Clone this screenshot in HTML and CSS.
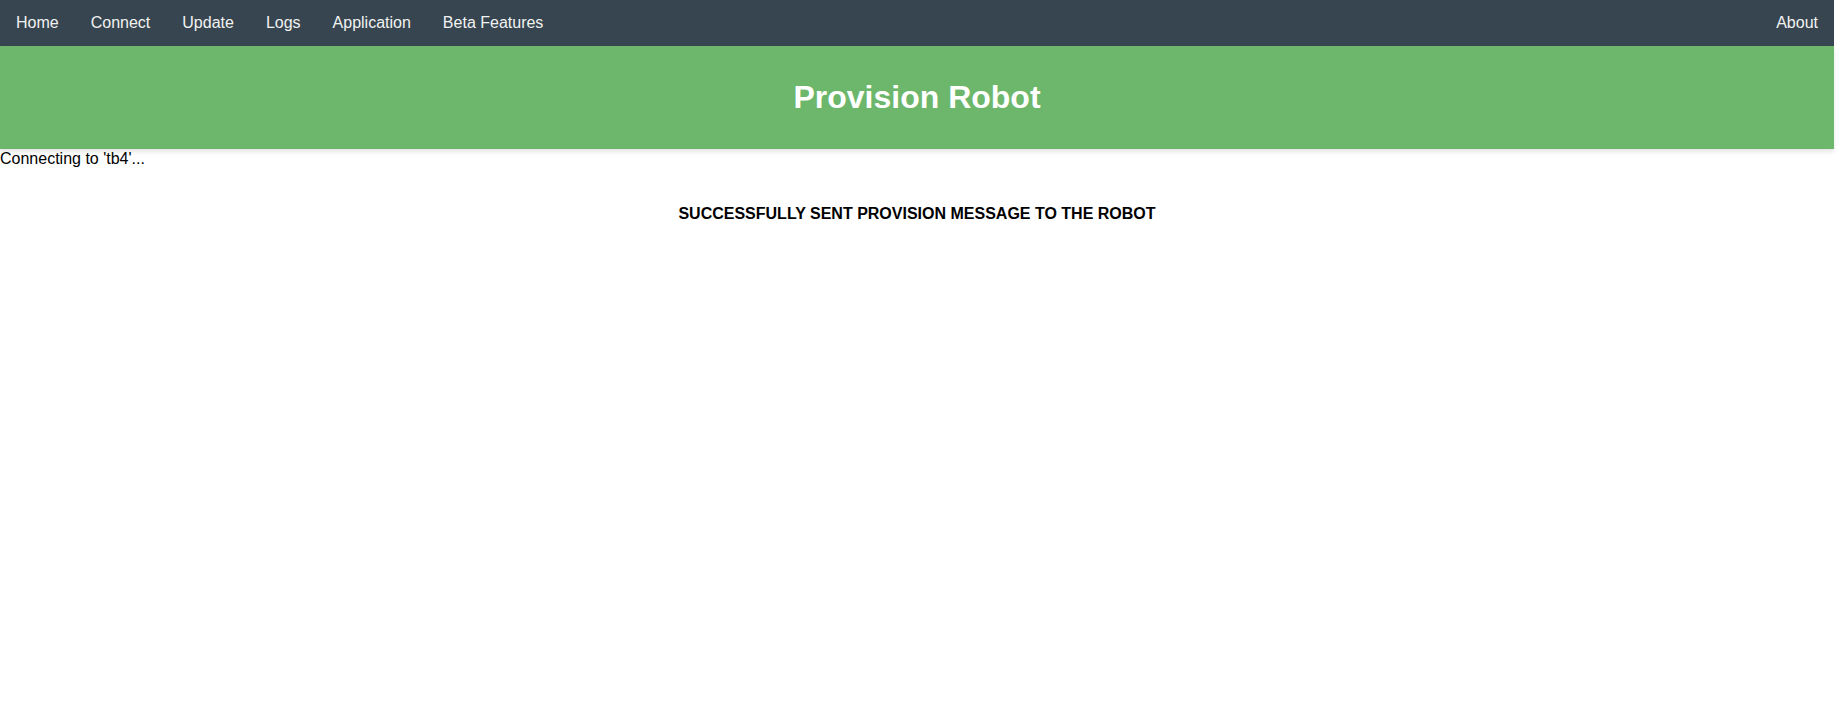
FILE: index.html
```html
<!DOCTYPE html>
<html lang="en">
<head>
<meta charset="utf-8">
<title>Provision Robot</title>
<link rel="stylesheet" href="styles.css">
</head>
<body>
<div class="page">
  <nav class="navbar">
    <div class="nav-left">
      <a class="nav-link" href="#">Home</a>
      <a class="nav-link" href="#">Connect</a>
      <a class="nav-link" href="#">Update</a>
      <a class="nav-link" href="#">Logs</a>
      <a class="nav-link" href="#">Application</a>
      <a class="nav-link" href="#">Beta Features</a>
    </div>
    <div class="nav-right">
      <a class="nav-link" href="#">About</a>
    </div>
  </nav>
  <header class="banner">
    <h1 class="banner-title">Provision Robot</h1>
  </header>
  <div class="status">Connecting to 'tb4'...</div>
  <p class="message">SUCCESSFULLY SENT PROVISION MESSAGE TO THE ROBOT</p>
</div>
</body>
</html>
```
FILE: styles.css
```css
html, body {
  margin: 0;
  padding: 0;
  background: #ffffff;
}
body {
  font-family: "Liberation Sans", Arial, sans-serif;
  font-size: 16px;
  color: #000000;
}
.page {
  margin-right: 8px;
}
.navbar {
  display: flex;
  justify-content: space-between;
  align-items: center;
  background: #36454f;
  height: 46px;
}
.nav-left, .nav-right {
  display: flex;
}
.nav-link {
  display: block;
  padding: 14px 16px;
  color: #f2f2f2;
  text-decoration: none;
  font-size: 16px;
  line-height: 18px;
}
.banner {
  position: relative;
  background: #6cb76b;
  padding: 33px 0 33px;
  text-align: center;
  box-shadow: 0 3px 4px rgba(0, 0, 0, 0.1);
}
.banner-title {
  margin: 0;
  font-size: 32px;
  line-height: 37px;
  font-weight: bold;
  color: #ffffff;
}
.status {
  line-height: 18px;
  margin-top: 1px;
}
.message {
  margin: 37px 0 0;
  text-align: center;
  font-weight: bold;
  line-height: 18px;
}
```
